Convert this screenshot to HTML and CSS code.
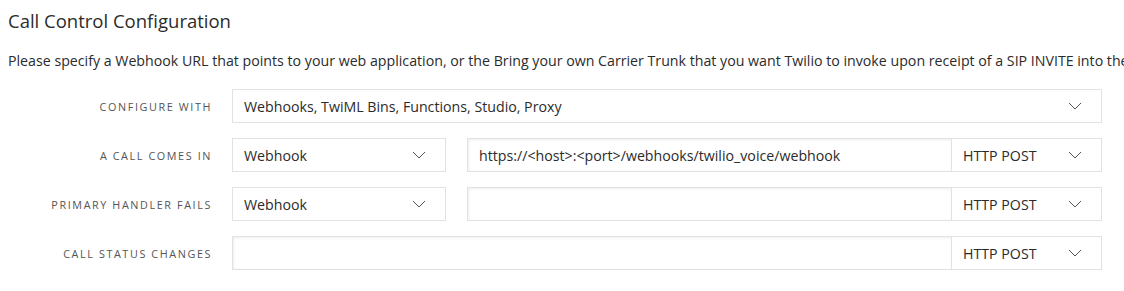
FILE: index.html
```html
<!DOCTYPE html>
<html lang="en">
<head>
    <meta charset="UTF-8">
    <meta name="viewport" content="width=device-width, initial-scale=1.0">
    <title>Call Control Configuration</title>
    <link rel="stylesheet" href="styles.css">
</head>
<body>
    <div class="section">
        <h2 class="section-title">Call Control Configuration</h2>
        <p class="section-desc">Please specify a Webhook URL that points to your web application, or the Bring your own Carrier Trunk that you want Twilio to invoke upon receipt of a SIP INVITE into the Domain.</p>

        <div class="form">
            <div class="form-row">
                <label class="form-label">Configure with</label>
                <div class="field select wide">
                    <span>Webhooks, TwiML Bins, Functions, Studio, Proxy</span>
                    <svg class="chevron" viewBox="0 0 14 8"><path d="M1 1 L7 7 L13 1"/></svg>
                </div>
            </div>
            <div class="form-row">
                <label class="form-label">A call comes in</label>
                <div class="field select handler">
                    <span>Webhook</span>
                    <svg class="chevron" viewBox="0 0 14 8"><path d="M1 1 L7 7 L13 1"/></svg>
                </div>
                <div class="field input url">https://&lt;host&gt;:&lt;port&gt;/webhooks/twilio_voice/webhook</div>
                <div class="field select method">
                    <span>HTTP POST</span>
                    <svg class="chevron" viewBox="0 0 14 8"><path d="M1 1 L7 7 L13 1"/></svg>
                </div>
            </div>
            <div class="form-row">
                <label class="form-label">Primary handler fails</label>
                <div class="field select handler">
                    <span>Webhook</span>
                    <svg class="chevron" viewBox="0 0 14 8"><path d="M1 1 L7 7 L13 1"/></svg>
                </div>
                <div class="field input url"></div>
                <div class="field select method">
                    <span>HTTP POST</span>
                    <svg class="chevron" viewBox="0 0 14 8"><path d="M1 1 L7 7 L13 1"/></svg>
                </div>
            </div>
            <div class="form-row">
                <label class="form-label">Call status changes</label>
                <div class="field input status"></div>
                <div class="field select method">
                    <span>HTTP POST</span>
                    <svg class="chevron" viewBox="0 0 14 8"><path d="M1 1 L7 7 L13 1"/></svg>
                </div>
            </div>
        </div>
    </div>
</body>
</html>
```

FILE: styles.css
```css
body {
    margin: 0;
    font-family: "Open Sans", Lato, sans-serif;
    color: #2b2b2b;
    background-color: #fff;
    overflow: hidden;
}
.section {
    padding: 8px 0 0 8px;
}
.section-title {
    margin: 0;
    font-size: 18.5px;
    font-weight: 400;
    line-height: 25px;
}
.section-desc {
    margin: 18px 0 0 0;
    font-size: 14.2px;
    line-height: 20px;
    white-space: nowrap;
}
.form {
    display: flex;
    flex-direction: column;
    gap: 15px;
    margin-top: 18px;
}
.form-row {
    display: flex;
    align-items: center;
    height: 34px;
}
.form-label {
    width: 204px;
    margin-right: 20px;
    text-align: right;
    font-size: 10.8px;
    letter-spacing: 1.6px;
    text-transform: uppercase;
    color: #555;
}
.field {
    box-sizing: border-box;
    height: 34px;
    border: 1px solid #e2e2e2;
    font-size: 14.2px;
    display: flex;
    align-items: center;
    padding: 0 11px;
    background-color: #fff;
}
.select {
    justify-content: space-between;
}
.input {
    box-shadow: inset 1px 1px 3px rgba(0, 0, 0, 0.07);
}
.chevron {
    width: 14px;
    height: 8px;
    margin-right: 8px;
    fill: none;
    stroke: #555;
    stroke-width: 1;
}
.wide {
    width: 870px;
}
.handler {
    width: 214px;
    margin-right: 21px;
}
.url {
    width: 485px;
}
.status {
    width: 720px;
}
.method {
    width: 150px;
    border-left: none;
}
```
